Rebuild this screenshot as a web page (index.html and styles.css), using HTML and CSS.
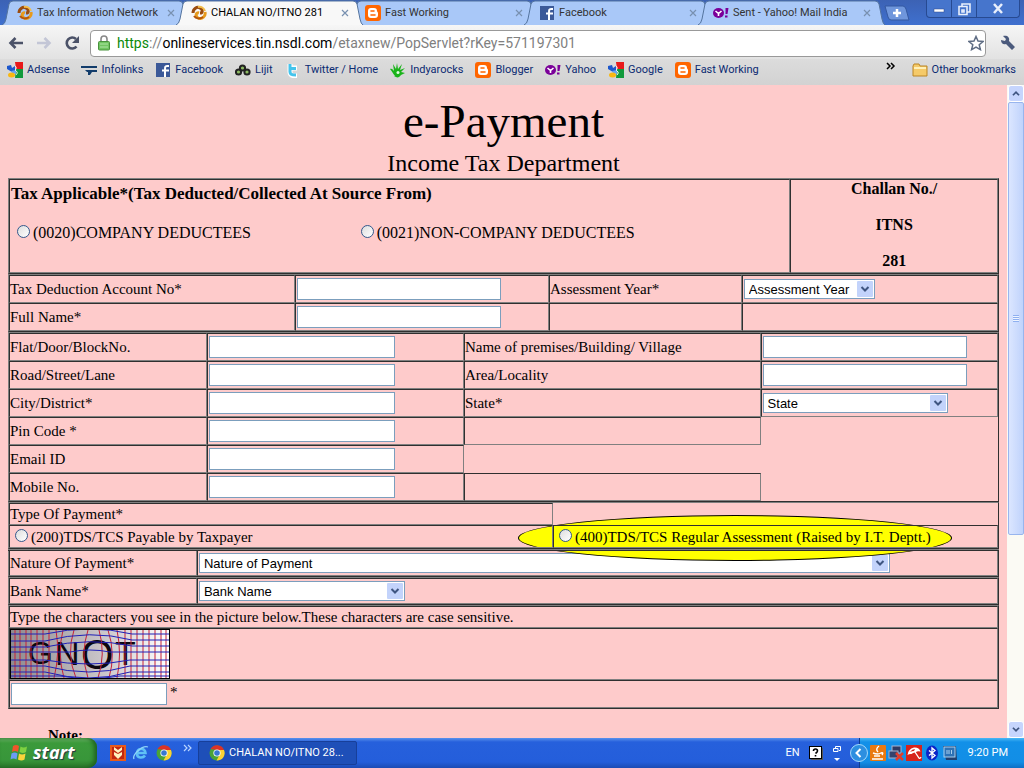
FILE: index.html
```html
<!DOCTYPE html>
<html lang="en">
<head>
<meta charset="utf-8">
<title>CHALAN NO/ITNO 281</title>
<link rel="stylesheet" href="styles.css">
</head>
<body>
<svg class="defs" aria-hidden="true">
  <symbol id="i-tin" viewBox="0 0 16 16"><g fill="none" stroke-width="3"><path d="M2 8C2 4 6 1 9 3c3 1 3 5 0 5" stroke="#9a4c10"/><path d="M14 7c1 4-3 8-7 6-3-2-2-6 1-5" stroke="#e79a1c"/><path d="M3 11c2 3 6 3 9 1" stroke="#b4560c" stroke-width="2"/><path d="M7 2c3-1 6 1 7 4" stroke="#f3bd4a" stroke-width="2"/></g></symbol>
  <symbol id="i-blogger" viewBox="0 0 16 16"><rect width="16" height="16" rx="3" fill="#f60"/><path d="M6 3h3a3 3 0 0 1 3 3c0 1 1 1 1 2v2a3 3 0 0 1-3 3H6a3 3 0 0 1-3-3V6a3 3 0 0 1 3-3z" fill="#fff"/><path d="M6 6h3M6 10h4" stroke="#f60" stroke-width="1.6" stroke-linecap="round"/></symbol>
  <symbol id="i-facebook" viewBox="0 0 16 16"><rect x="1" y="1" width="14" height="14" fill="#3b5998"/><path d="M14 4h-2c-2 0-2 1-2 4v7M7 8.500h7" fill="none" stroke="#fff" stroke-width="2"/></symbol>
  <symbol id="i-yahoo" viewBox="0 0 16 16"><ellipse cx="5.500" cy="8" rx="5.500" ry="5" fill="#7b0099"/><path d="M2.500 6l3 2.500 3-2.500M5.500 8v3" fill="none" stroke="#fff" stroke-width="1.600"/><path d="M12.500 3h3l-1 6h-2zM12 10.500h2.500v2H12z" fill="#7b0099"/></symbol>
  <symbol id="i-google" viewBox="0 0 16 16"><path d="M8 0h8v7H9z" fill="#e8191a"/><path d="M9 7h7v9H8z" fill="#119a3c"/><path d="M0 4l4-1 1 3 3-2v5l-3 1-5-3z" fill="#1c57cc"/><path d="M4 9l5-1v4l-4-1z" fill="#68a5f0"/><ellipse cx="4.500" cy="13" rx="3.500" ry="2.500" fill="#f9b812"/><path d="M8 4c3 2-1 4 1 5s1 3 0 4" fill="none" stroke="#fff"/></symbol>
  <symbol id="i-infolinks" viewBox="0 0 16 16"><path d="M0 4h16v2H0zM4 8h12v2h-5l-2 3H7V10H6z" fill="#123c6b"/></symbol>
  <symbol id="i-lijit" viewBox="0 0 16 16"><g fill="#8dbb62" stroke="#222" stroke-width="2"><circle cx="7.500" cy="6" r="2.600"/><circle cx="3.500" cy="10" r="2.600"/><circle cx="12" cy="10" r="2.600"/></g></symbol>
  <symbol id="i-twitter" viewBox="0 0 16 16"><path d="M5 2v8c0 3 2 4 7 4M5 6h7" fill="none" stroke="#fff" stroke-width="5"/><path d="M5 2v8c0 2 2 3 6 3M5 6.500h6" fill="none" stroke="#45c4ec" stroke-width="3"/></symbol>
  <symbol id="i-hand" viewBox="0 0 16 16"><path d="M5 14C3 12 2 9 0 7c2-1 3 1 4 2L3 2l3 5 1-6 1 6 4-5-2 6 5-2-4 4 4 1-4 2c-2 3-4 3-7 1z" fill="#19b319"/><circle cx="8" cy="10.500" r="1.500" fill="#dfffdf"/></symbol>
  <symbol id="i-folder" viewBox="0 0 16 16"><path d="M1 4l1-2h5l1 2h7v10H1z" fill="#f5ca69" stroke="#bb8525"/><path d="M2 6h12" stroke="#fff0b8" stroke-width="2"/></symbol>
  <symbol id="i-chrome" viewBox="0 0 16 16"><circle cx="8" cy="8" r="7.500" fill="#4aa336"/><path d="M1.500 4A7.500 7.500 0 0 1 15 5H8z" fill="#db3327"/><path d="M15 5a7.500 7.500 0 0 1-7.500 10.500L11 9 8 5z" fill="#fbd233"/><circle cx="8" cy="8" r="3.600" fill="#fff"/><circle cx="8" cy="8" r="2.800" fill="#3878d0"/></symbol>
  <symbol id="i-x" viewBox="0 0 8 8"><path d="M1 1l6 6M7 1L1 7" stroke="currentColor" stroke-width="1.200"/></symbol>
  <symbol id="i-down" viewBox="0 0 16 16"><rect width="16" height="16" rx="1" fill="#c3d3fb"/><path d="M4.500 6L8 9.500 11.500 6" fill="none" stroke="#3f5581" stroke-width="2"/></symbol>
  <symbol id="tab-shape" viewBox="0 0 190 25" preserveAspectRatio="none"><path d="M2 25Q5 24 6 19L9 4q1-3 4-3h166q3 0 4 3l3 15q1 5 3 6" stroke="#54749f"/></symbol>
</svg>

<header class="browser">
  <div class="tabs">
    <div class="tab"><svg class="shape"><use href="#tab-shape"/></svg><svg class="icon"><use href="#i-tin"/></svg><span class="tab-title">Tax Information Network</span><button class="close" aria-label="Close tab"><svg><use href="#i-x"/></svg></button></div>
    <div class="tab active"><svg class="shape"><use href="#tab-shape"/></svg><svg class="icon"><use href="#i-tin"/></svg><span class="tab-title">CHALAN NO/ITNO 281</span><button class="close" aria-label="Close tab"><svg><use href="#i-x"/></svg></button></div>
    <div class="tab"><svg class="shape"><use href="#tab-shape"/></svg><svg class="icon"><use href="#i-blogger"/></svg><span class="tab-title">Fast Working</span><button class="close" aria-label="Close tab"><svg><use href="#i-x"/></svg></button></div>
    <div class="tab"><svg class="shape"><use href="#tab-shape"/></svg><svg class="icon"><use href="#i-facebook"/></svg><span class="tab-title">Facebook</span><button class="close" aria-label="Close tab"><svg><use href="#i-x"/></svg></button></div>
    <div class="tab"><svg class="shape"><use href="#tab-shape"/></svg><svg class="icon"><use href="#i-yahoo"/></svg><span class="tab-title">Sent - Yahoo! Mail India</span><button class="close" aria-label="Close tab"><svg><use href="#i-x"/></svg></button></div>
    <button class="new-tab" aria-label="New tab"><svg viewBox="0 0 26 16"><path d="M1 1h18q2 0 3 3l3 11H7q-2 0-3-3z" fill="#6f96dc" stroke="#3458a0"/><path d="M13 4v8M9 8h8" stroke="#fff" stroke-width="2.500"/></svg></button>
    <div class="window-buttons">
      <button aria-label="Minimize"><svg viewBox="0 0 16 16"><rect x="3" y="8" width="10" height="3" fill="#fff" stroke="#2c4a8a" stroke-width=".5"/></svg></button>
      <button aria-label="Restore"><svg viewBox="0 0 16 16"><path d="M6 5V3h8v8h-3M3 5.500h8v8H3zM6 9h2v2H6z" fill="none" stroke="#e8effc" stroke-width="1.600"/></svg></button>
      <button aria-label="Close"><svg viewBox="0 0 16 16"><path d="M4 3l8 9M12 3l-8 9" stroke="#e8effc" stroke-width="2.500"/></svg></button>
    </div>
  </div>
  <div class="toolbar">
    <button class="nav" aria-label="Back"><svg viewBox="0 0 16 16"><path d="M15 8H3M7.500 3L2.500 8l5 5" fill="none" stroke="#4b5268" stroke-width="2.600"/></svg></button>
    <button class="nav" aria-label="Forward"><svg viewBox="0 0 16 16"><path d="M1 8h12M8.500 3l5 5-5 5" fill="none" stroke="#c3c6d6" stroke-width="2.600"/></svg></button>
    <button class="nav" aria-label="Reload"><svg viewBox="0 0 16 16"><path d="M12.500 11.500A5.500 5.500 0 1 1 12 4" fill="none" stroke="#4b5268" stroke-width="2.600"/><path d="M15 1v7H8z" fill="#4b5268"/></svg></button>
    <div class="address">
      <svg class="lock" viewBox="0 0 12 16"><path d="M3 7V4a3 3 0 0 1 6 0v3" fill="none" stroke="#888" stroke-width="1.600"/><rect x=".5" y="6.500" width="11" height="8.500" rx="1" fill="#71c562" stroke="#49933d"/><path d="M2 9h8M2 12h8" stroke="#b1e4a5"/></svg>
      <a class="url" href="#"><span class="secure">https</span>://<b>onlineservices.tin.nsdl.com</b>/etaxnew/PopServlet?rKey=571197301</a>
      <button class="nav star" aria-label="Bookmark this page"><svg viewBox="0 0 16 16"><path d="M8 1.500l2 4.600 5 .4-3.800 3.200 1.200 4.900L8 12l-4.400 2.600 1.200-4.900L1 6.500l5-.4z" fill="#fff" stroke="#5f6d84" stroke-width="1.500"/></svg></button>
    </div>
    <button class="nav" aria-label="Settings"><svg viewBox="0 0 16 16"><path d="M1 5l4 1 1-2-3-3c4-1 7 1 6 5l6 6-3 3-6-6C3 10 1 8 1 5z" fill="#4b5a7c"/></svg></button>
  </div>
  <nav class="bookmarks">
    <a href="#"><svg class="icon"><use href="#i-google"/></svg>Adsense</a>
    <a href="#"><svg class="icon"><use href="#i-infolinks"/></svg>Infolinks</a>
    <a href="#"><svg class="icon"><use href="#i-facebook"/></svg>Facebook</a>
    <a href="#"><svg class="icon"><use href="#i-lijit"/></svg>Lijit</a>
    <a href="#"><svg class="icon"><use href="#i-twitter"/></svg>Twitter / Home</a>
    <a href="#"><svg class="icon"><use href="#i-hand"/></svg>Indyarocks</a>
    <a href="#"><svg class="icon"><use href="#i-blogger"/></svg>Blogger</a>
    <a href="#"><svg class="icon"><use href="#i-yahoo"/></svg>Yahoo</a>
    <a href="#"><svg class="icon"><use href="#i-google"/></svg>Google</a>
    <a href="#"><svg class="icon"><use href="#i-blogger"/></svg>Fast Working</a>
    <button class="more" aria-label="More bookmarks"><svg viewBox="0 0 10 8"><path d="M1 1l3 3-3 3M5 1l3 3-3 3" fill="none" stroke="#000" stroke-width="1.500"/></svg></button>
    <a href="#"><svg class="icon"><use href="#i-folder"/></svg>Other bookmarks</a>
  </nav>
</header>

<div class="viewport">
  <main class="page">
    <h1>e-Payment</h1>
    <h2>Income Tax Department</h2>
    <form>
      <table class="grid applicable">
        <colgroup><col class="w79"><col></colgroup>
        <tr>
          <td>
            <h3>Tax Applicable*(Tax Deducted/Collected At Source From)</h3>
            <div class="choices">
              <label><input type="radio" name="deductee">(0020)COMPANY DEDUCTEES</label>
              <label><input type="radio" name="deductee">(0021)NON-COMPANY DEDUCTEES</label>
            </div>
          </td>
          <td class="challan"><p>Challan No./</p><p>ITNS</p><p>281</p></td>
        </tr>
      </table>

      <table class="grid">
        <colgroup><col class="account-label"><col class="account-field"><col class="year-label"><col></colgroup>
        <tr>
          <td><label for="tan">Tax Deduction Account No*</label></td><td><input class="text wide" id="tan"></td>
          <td><label for="year">Assessment Year*</label></td>
          <td><span class="select year"><select id="year"><option>Assessment Year</option></select><svg><use href="#i-down"/></svg></span></td>
        </tr>
        <tr><td><label for="name">Full Name*</label></td><td><input class="text wide" id="name"></td><td></td><td></td></tr>
      </table>

      <table class="grid">
        <colgroup><col class="w20"><col class="w26"><col class="w30"><col></colgroup>
        <tr><td><label for="flat">Flat/Door/BlockNo.</label></td><td><input class="text" id="flat"></td><td><label for="premises">Name of premises/Building/ Village</label></td><td><input class="text wide" id="premises"></td></tr>
        <tr><td><label for="road">Road/Street/Lane</label></td><td><input class="text" id="road"></td><td><label for="area">Area/Locality</label></td><td><input class="text wide" id="area"></td></tr>
        <tr><td><label for="city">City/District*</label></td><td><input class="text" id="city"></td><td><label for="state">State*</label></td><td><span class="select state"><select id="state"><option>State</option></select><svg><use href="#i-down"/></svg></span></td></tr>
        <tr><td><label for="pin">Pin Code *</label></td><td><input class="text" id="pin"></td><td></td></tr>
        <tr><td><label for="email">Email ID</label></td><td><input class="text" id="email"></td></tr>
        <tr><td><label for="mobile">Mobile No.</label></td><td><input class="text" id="mobile"></td><td></td></tr>
      </table>

      <div class="highlighted">
        <div class="ellipse"></div>
        <table class="grid compact">
          <colgroup><col class="w55"><col></colgroup>
          <tr><td>Type Of Payment*</td></tr>
          <tr>
            <td><label class="option"><input type="radio" name="type">(200)TDS/TCS Payable by Taxpayer</label></td>
            <td><label class="option"><input type="radio" name="type">(400)TDS/TCS Regular Assessment (Raised by I.T. Deptt.)</label></td>
          </tr>
        </table>
      </div>

      <table class="grid single">
        <colgroup><col class="w19"><col></colgroup>
        <tr><td><label for="nature">Nature Of Payment*</label></td><td><span class="select nature"><select id="nature"><option>Nature of Payment</option></select><svg><use href="#i-down"/></svg></span></td></tr>
      </table>
      <table class="grid single">
        <colgroup><col class="w19"><col></colgroup>
        <tr><td><label for="bank">Bank Name*</label></td><td><span class="select bank"><select id="bank"><option>Bank Name</option></select><svg><use href="#i-down"/></svg></span></td></tr>
      </table>

      <table class="grid captcha">
        <tr class="short"><td><label for="captcha">Type the characters you see in the picture below.These characters are case sensitive.</label></td></tr>
        <tr><td>
          <svg class="captcha-image" viewBox="0 0 160 50" role="img" aria-label="Verification picture">
            <defs><linearGradient id="shade"><stop offset="0" stop-color="#8e8a8e"/><stop offset=".6" stop-color="#ccc8cc"/><stop offset="1" stop-color="#fff"/></linearGradient></defs>
            <rect width="160" height="50" fill="url(#shade)"/>
            <g class="letters"><text x="18" y="35" font-size="32">G</text><text x="45" y="36" font-size="34">N</text><text x="71" y="40" font-size="42">O</text><text x="105" y="36" font-size="34">T</text></g>
            <path d="M5 1v48M10 1v48M16 1v48M21 1v48M27 1v48M33 1v48M39 1v48M46 1q4 24-2 48M53 1q-6 24 1 48M64 1q-8 24 2 48M78 1q-8 24 0 48M89 1q7 24-1 48M98 1q8 24 1 48M107 1q5 24 0 48M115 1v48M121 1v48M127 1v48M133 1v48M139 1v48M145 1v48M151 1v48M156 1v48" fill="none" stroke="#c82038"/>
            <path d="M0 5h35Q80-5 122 5h38M0 12h35Q80 0 122 11h38M0 18h35Q80 8 122 17h38M0 23h60q20-4 40 0h60M0 31h35q45 8 85 0h40M0 37h35q45 12 85 0h40M0 43h35q45 12 85 0h40M0 47h50q30 5 60 0h50" fill="none" stroke="#2020b8"/>
            <rect x=".5" y=".5" width="159" height="49" fill="none" stroke="#000"/>
          </svg>
        </td></tr>
        <tr><td><input class="text code" id="captcha">*</td></tr>
      </table>
      <p class="note">Note:</p>
    </form>
  </main>
  <div class="scrollbar">
    <button class="arrow" aria-label="Scroll up"><svg viewBox="0 0 16 16"><path d="M4.500 10L8 6.500 11.500 10" fill="none" stroke="#3f5581" stroke-width="2"/></svg></button>
    <div class="track"><div class="thumb"></div></div>
    <button class="arrow" aria-label="Scroll down"><svg viewBox="0 0 16 16"><path d="M4.500 6L8 9.500 11.500 6" fill="none" stroke="#3f5581" stroke-width="2"/></svg></button>
  </div>
</div>

<footer class="taskbar">
  <button class="start"><svg viewBox="0 0 20 18"><path d="M3 3q3-2 6 0L8 9Q5 7 2 9z" fill="#f0552b"/><path d="M10.500 3.500q3 2 6.500 0L16 9q-3 2-6.500 0z" fill="#7ed141"/><path d="M1.500 10.500q3-2 6 0l-1 6q-3-2-6 0z" fill="#6c9cf5"/><path d="M9 10.500q3 2 6.500 0l-1 6q-3 2-6.500 0z" fill="#fad43b"/></svg>start</button>
  <div class="quick">
    <a href="#" aria-label="Download manager"><svg class="icon" viewBox="0 0 16 16"><rect width="16" height="16" fill="#e85a1a"/><rect x="2" y="2" width="12" height="12" fill="#c22710"/><path d="M4 2l4 3 4-3v3L8 8 4 5zM4 7l4 2 4-2v3l-4 4-4-4z" fill="#fff2bd"/></svg></a>
    <a href="#" aria-label="Internet Explorer"><svg class="icon" viewBox="0 0 16 16"><path d="M4 8h8.500C12 2 4 3 4 8.500c0 5 6 5 8 2" fill="none" stroke="#5fc1f5" stroke-width="2.600"/><path d="M1 14C-1 10 9 0 15 2" fill="none" stroke="#8fd4f8" stroke-width="1.300"/></svg></a>
    <a href="#" aria-label="Chrome"><svg class="icon"><use href="#i-chrome"/></svg></a>
    <svg class="chev" viewBox="0 0 10 8"><path d="M1 1l3 3-3 3M5 1l3 3-3 3" fill="none" stroke="#b8d4ff" stroke-width="1.200"/></svg>
  </div>
  <button class="task"><svg class="icon"><use href="#i-chrome"/></svg>CHALAN NO/ITNO 28...</button>
  <div class="language">
    <span class="lang">EN</span>
    <svg class="icon" viewBox="0 0 16 16"><rect x="3" y="3" width="12" height="12" fill="#555"/><rect x="1.500" y="1.500" width="12" height="12" fill="#fff" stroke="#000"/><path d="M5.500 6q0-2 2-2t2 2q0 1-2 2.500M7.500 10v1.500" fill="none" stroke="#000" stroke-width="1.600"/></svg>
    <svg class="mini" viewBox="0 0 10 18"><path d="M3.500 4V2.500h5v4H7M1.500 4.500H6v3H1.500z" fill="none" stroke="#fff"/><path d="M2 14h6l-3 3z" fill="#fff"/></svg>
  </div>
  <div class="tray">
    <button class="expand" aria-label="Show hidden icons"><svg viewBox="0 0 18 18"><circle cx="9" cy="9" r="8.500" fill="#2d8fe0" stroke="#a6d9fa"/><path d="M10.500 5l-4 4 4 4" fill="none" stroke="#fff" stroke-width="2"/></svg></button>
    <svg class="icon" viewBox="0 0 16 16"><rect width="16" height="16" rx="1" fill="#e97911"/><path d="M9 1q-4 3-1 6M3 8q5 2 8 0 3-1 1 2M4 11h6M2 14h11" fill="none" stroke="#fff" stroke-width="1.400"/></svg>
    <svg class="icon" viewBox="0 0 16 16"><rect x="4" y="1" width="9" height="7" fill="#2e3a62" stroke="#a8b4d0"/><rect x="1" y="6" width="9" height="7" fill="#34436d" stroke="#a8b4d0"/><path d="M8 8l7 7M15 8l-7 7" stroke="#e23b2a" stroke-width="2.500"/></svg>
    <svg class="icon" viewBox="0 0 16 16"><rect width="16" height="16" fill="#d7231b"/><path d="M1.500 10Q2 4 8 2.500q5-.5 6.500 4-3-1-5 1-2-.5-4 1.500-2-.5-4 1z" fill="#fff"/><path d="M4 7q2-3 5-3l-1 2q-2 0-4 1z" fill="#d7231b"/><path d="M9 7l4 6q1 1 2-1" fill="none" stroke="#fff" stroke-width="1.300"/></svg>
    <svg class="icon" viewBox="0 0 16 16"><ellipse cx="8" cy="8" rx="6" ry="7.500" fill="#0b23c8"/><path d="M5 5.500l6 5L8 13V3l3 2.500-6 5" fill="none" stroke="#fff" stroke-width="1.300"/></svg>
    <svg class="icon" viewBox="0 0 16 16"><path d="M1 1h13l1 14H4z" fill="#22406e"/><rect x="2" y="2" width="11" height="10" fill="#2e72b5" stroke="#a9d0ee"/><path d="M5 5v4M7 5v4M9.500 5v4" stroke="#a9d0ee"/></svg>
    <time>9:20 PM</time>
  </div>
</footer>
</body>
</html>
```

FILE: styles.css
```css
* { box-sizing: border-box; }
body { margin: 0; height: 100vh; display: flex; flex-direction: column; overflow: hidden; font: 11px/16px Roboto, "Noto Sans", sans-serif; }
button { margin: 0; padding: 0; border: 0; background: none; font: inherit; color: inherit; }
a { color: inherit; text-decoration: none; }
svg { display: block; }
.defs { position: absolute; width: 0; height: 0; }
.icon { width: 16px; height: 16px; flex: none; }

/* Browser chrome */
.browser { flex: none; background: #dedede; }
.tabs { display: flex; height: 25px; background: linear-gradient(#3c62b4, #3f70cf); }
.tab { position: relative; z-index: 0; flex: 0 1 190px; min-width: 0; margin-right: -16px; padding: 1px 15px 0 17px; display: flex; align-items: center; gap: 4px; color: #333; }
.tab.active { z-index: 1; color: #000; }
.shape { position: absolute; z-index: -1; inset: 0; width: 100%; height: 100%; fill: #a9c8f8; }
.active .shape { fill: #f8f8f8; }
.tab-title { flex: 1; white-space: nowrap; overflow: hidden; }
.close { color: #7890b0; }
.close svg { width: 8px; height: 8px; }
.new-tab { width: 26px; margin-left: 14px; }
.new-tab svg { width: 26px; height: 16px; }
.window-buttons { display: flex; margin: 0 4px 0 auto; height: 18px; border: 1px solid #274a91; border-top: 0; border-radius: 0 0 4px 4px; background: #4675cc; }
.window-buttons button { width: 25px; display: grid; place-items: center; border-right: 1px solid #274a91; }
.window-buttons button:last-child { width: 42px; border: 0; }
.window-buttons svg { width: 16px; height: 16px; }
.toolbar { display: flex; align-items: center; gap: 12px; height: 34px; padding: 2px 8px 0; background: linear-gradient(#f6f6f6, #e2e2e2); }
.nav svg { width: 16px; height: 16px; }
.address { flex: 1; min-width: 0; height: 27px; margin: 0 2px 0 -2px; display: flex; align-items: center; gap: 7px; padding: 0 0 0 7px; border: 1px solid #999; border-radius: 4px; background: #fff; }
.lock { width: 12px; height: 16px; flex: none; }
.star { padding-right: 1px; }
.url { flex: 1; overflow: hidden; white-space: nowrap; font-size: 14px; line-height: 20px; color: #808080; }
.url b { font-weight: 400; color: #000; }
.url .secure { color: #0a8a0a; }
.bookmarks { display: flex; align-items: center; gap: 12px; height: 26px; padding: 0 8px 4px 7px; background: linear-gradient(#dcdcdc, #d2d2d2); color: #0b2a72; white-space: nowrap; }
.bookmarks a { display: flex; align-items: center; gap: 4px; }
.more { margin: 0 4px 8px auto; }
.more svg { width: 10px; height: 8px; }

/* Page */
.viewport { flex: 1; min-height: 0; display: flex; background: #fecbcb; }
.page { flex: 1; min-width: 0; padding: 8px; overflow: hidden; font: 15px/18px "Liberation Serif", "Times New Roman", serif; color: #000; }
h1, h2, h3, p { margin: 0; font-weight: 400; }
h1 { font-size: 47px; line-height: 57px; text-align: center; }
h2 { font-size: 24px; line-height: 26px; padding-bottom: 2px; text-align: center; }
h3 { font-size: 17px; line-height: 28px; font-weight: 700; padding-left: 1px; }

.grid { width: 100%; table-layout: fixed; border-collapse: separate; border-spacing: 0; border: 1px solid; border-color: #808080 #303030 #303030 #808080; }
.grid td { height: 28px; padding: 0; vertical-align: middle; border: 1px solid; border-color: #303030 #808080 #808080 #303030; white-space: nowrap; }
.w19 { width: 19%; }
.w20 { width: 20%; }
.w26 { width: 26%; }
.w30 { width: 30%; }
.w55 { width: 55%; }
.w79 { width: 79%; }
.account-label { width: 28.9%; }
.account-field { width: 25.7%; }
.year-label { width: 19.5%; }
.applicable { font-size: 16px; }
.applicable td { height: 94px; vertical-align: top; }
.choices { display: grid; grid-template-columns: 4fr 5fr; padding: 16px 0 0 6px; }
.challan { text-align: center; }
.challan p { font-weight: 700; padding-bottom: 18px; }
.challan p:last-child { padding-bottom: 0; }
.compact td { height: 22px; }
.compact tr:last-child td { height: 23px; }
.single td { height: 26px; }
.captcha .short td { height: 22px; }

input[type="radio"] { appearance: none; width: 13px; height: 13px; margin: 0 3px 0 1px; border: 1px solid #33598c; border-radius: 50%; background: linear-gradient(135deg, #ddd, #fff); }
input[type="radio"]:checked { background: radial-gradient(#2a9c1e 3px, #fff 4px); }
.option { padding-left: 4px; }
.text { display: inline-block; vertical-align: middle; width: 186px; height: 22px; margin: 0 1px; padding: 0 4px; border: 1px solid #7b9ebd; background: #fff; font: 13px "Liberation Sans", Arial, sans-serif; }
.text.wide { width: 204px; }
.text.code { width: 156px; margin-right: 3px; }
.select { position: relative; display: block; max-width: 100%; margin-left: 1px; }
.select select { appearance: none; display: block; width: 100%; height: 20px; padding: 0 20px 0 4px; border: 1px solid #7b9ebd; border-radius: 0; background: #fff; color: #000; font: 13px "Liberation Sans", Arial, sans-serif; }
.select svg { position: absolute; top: 2px; right: 2px; width: 16px; height: 16px; pointer-events: none; }
.year { width: 131px; }
.state { width: 185px; }
.nature { width: 691px; }
.bank { width: 206px; }

/* The marker ellipse lies under this table's rules and over the row below */
.highlighted { position: relative; z-index: 1; pointer-events: none; }
.highlighted .grid { position: relative; pointer-events: auto; box-shadow: 0 1px #808080, 0 2px #303030; }
.ellipse { position: absolute; left: 51.5%; width: 43.8%; top: 13px; height: 46px; border: 1px solid #000; border-radius: 50%; background: #ff0; }
.captcha-image { width: 160px; height: 50px; }
.letters { font-family: "Liberation Sans", Arial, sans-serif; fill: #0c0810; }
.note { padding: 17px 0 0 40px; font-weight: 700; }

.scrollbar { flex: none; width: 17px; display: flex; flex-direction: column; background: #fbfaf4; padding-left: 1px; }
.arrow { height: 17px; border: 1px solid #fff; border-radius: 3px; background: #c6d5fd; }
.arrow svg { width: 100%; height: 100%; }
.track { flex: 1; }
.thumb { height: 70%; border: 1px solid #98b5ee; border-radius: 2px; background: linear-gradient(90deg, #dbe6ff, #c0d3fc); display: grid; place-items: center; }
.thumb::after { content: ""; width: 6px; height: 7px; background: repeating-linear-gradient(#8fb0f0 0 1px, #eef4ff 1px 2px); }

/* Taskbar */
.taskbar { flex: none; height: 30px; display: flex; align-items: center; color: #fff; background: linear-gradient(#5a92ec, #2660dc 4px, #245edb 24px, #1c4bb4); }
.start { width: 97px; height: 30px; display: flex; align-items: center; gap: 3px; padding: 0 0 2px 10px; border-radius: 0 9px 9px 0; background: linear-gradient(#6fb86b, #3b9a3b 5px, #38963a 22px, #2a7529); box-shadow: inset -3px 0 4px #1f6320; font: italic 700 18px/24px "Open Sans", "Noto Sans", sans-serif; text-shadow: 1px 1px 1px #234; }
.start svg { width: 20px; height: 18px; }
.quick { display: flex; align-items: center; gap: 7px; padding: 0 5px 0 13px; }
.chev { width: 10px; height: 8px; margin: 0 0 10px 4px; }
.task { display: flex; align-items: center; gap: 4px; width: 159px; height: 24px; padding: 0 10px; border: 1px solid #173f9a; border-radius: 2px; background: #1e4fb8; white-space: nowrap; }
.language { display: flex; align-items: center; gap: 8px; margin-left: auto; padding-right: 17px; }
.mini { width: 10px; height: 18px; }
.tray { align-self: stretch; display: flex; align-items: center; gap: 2px; padding-right: 16px; background: linear-gradient(#4ab8f5, #1290e8 4px, #128ee6 24px, #0e6fc4); border-left: 1px solid #0c3c92; }
.expand { margin-left: -10px; }
.expand svg { width: 18px; height: 18px; }
time { padding-left: 8px; }
```
